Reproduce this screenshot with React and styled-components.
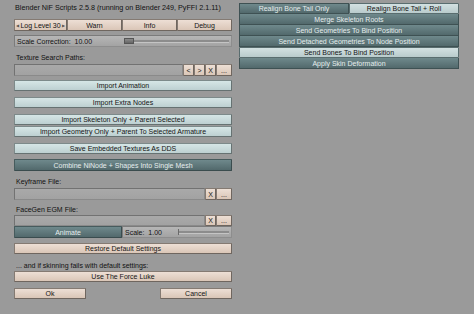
import React from 'react';
import styled, { createGlobalStyle, css } from 'styled-components';

const Global = createGlobalStyle`
  html, body { margin: 0; padding: 0; background: #9a9a9a; }
  body {
    width: 474px; height: 314px; overflow: hidden;
    font-family: "Liberation Sans", Arial, sans-serif;
    color: #111;
  }
`;

const Page = styled.div`
  display: flex;
  gap: 7px;
  padding: 3px 0 0 14px;
  box-sizing: border-box;
  height: 314px;
`;

const LeftCol = styled.div`
  width: 218px;
  display: flex;
  flex-direction: column;
`;

const RightCol = styled.div`
  width: 220px;
  display: flex;
  flex-direction: column;
`;

const Title = styled.div`
  font-size: 7.2px;
  line-height: 10px;
  height: 10px;
  padding-left: 1px;
  white-space: nowrap;
`;

const Label = styled.div`
  margin-top: ${p => p.$mt || 0}px;
  height: 10px;
  line-height: 10px;
  font-size: 7px;
  padding-left: 2px;
  white-space: nowrap;
`;

const variants = {
  beige: css`
    background: linear-gradient(#eddfd5, #dac6b7);
    color: #151515;
    border-color: #847a72 #6f665f #6f665f #847a72;
  `,
  blue: css`
    background: linear-gradient(#d6e6e6, #bdd0d1);
    color: #151515;
    border-color: #7d8a8a #667272 #667272 #7d8a8a;
  `,
  teal: css`
    background: linear-gradient(#6f898c, #52696c);
    color: #e6eeee;
    border-color: #465b5d #3a4c4e #3a4c4e #465b5d;
  `,
  pale: css`
    background: linear-gradient(#d3e1e2, #b9cbcc);
    color: #151515;
    border-color: #596d6f;
  `,
};

const Btn = styled.div`
  box-sizing: border-box;
  height: ${p => p.$h || 11}px;
  ${p => (p.$w ? `width: ${p.$w}px; flex: none;` : '')}
  ${p => (p.$grow ? 'flex: 1;' : '')}
  margin-top: ${p => p.$mt || 0}px;
  border: 1px solid;
  border-radius: 1px;
  display: flex;
  align-items: center;
  justify-content: center;
  font-size: 7px;
  line-height: 1;
  white-space: nowrap;
  overflow: hidden;
  ${p => variants[p.$v || 'blue']}
`;

const Row = styled.div`
  display: flex;
  height: ${p => p.$h || 11}px;
  margin-top: ${p => p.$mt || 0}px;
  justify-content: ${p => p.$justify || 'flex-start'};
`;

const Field = styled.div`
  box-sizing: border-box;
  flex: 1;
  height: 100%;
  background: linear-gradient(#a9a9a9, #a2a2a2);
  border: 1px solid;
  border-color: #727272 #8a8a8a #8a8a8a #727272;
`;

const NumField = styled.div`
  box-sizing: border-box;
  width: ${p => p.$w}px;
  flex: none;
  height: 100%;
  background: linear-gradient(#eddfd5, #dac6b7);
  border: 1px solid;
  border-color: #847a72 #6f665f #6f665f #847a72;
  display: flex;
  align-items: center;
  justify-content: space-between;
  padding: 0 1px;
  font-size: 7px;
  white-space: nowrap;
`;

const Arrow = styled.span`
  font-size: 4px;
  color: #5a5550;
`;

const Slider = styled.div`
  box-sizing: border-box;
  display: flex;
  align-items: center;
  height: ${p => p.$h || 12}px;
  ${p => (p.$grow ? 'flex: 1;' : '')}
  margin-top: ${p => p.$mt || 0}px;
  background: linear-gradient(#b6b6b6, #a3a3a3);
  border: 1px solid;
  border-color: #7b7b7b #8d8d8d #8d8d8d #7b7b7b;
  font-size: 7px;
  white-space: nowrap;
`;

const SliderText = styled.div`
  width: ${p => p.$w}px;
  flex: none;
  padding-left: 2px;
  box-sizing: border-box;
`;

const Track = styled.div`
  flex: 1;
  display: flex;
  align-items: center;
  padding-right: 2px;
`;

const Knob = styled.div`
  width: ${p => p.$w}px;
  height: ${p => p.$h}px;
  flex: none;
  background: ${p => (p.$w > 2 ? 'linear-gradient(#8a8a8a, #666)' : '#6a6a6a')};
  border: ${p => (p.$w > 2 ? '1px solid #555' : 'none')};
  box-sizing: border-box;
`;

const Line = styled.div`
  flex: 1;
  height: 2px;
  background: #8c8c8c;
  border-bottom: 1px solid #c4c4c4;
`;

const TealRow = styled(Btn)`
  border-radius: 0;
  border-width: ${p => (p.$first ? 1 : 0)}px 1px 1px 1px;
  border-color: #3e5153;
`;

export default function App() {
  return (
    <>
      <Global />
      <Page>
        <LeftCol>
          <Title>Blender NiF Scripts 2.5.8 (running on Blender 249, PyFFI 2.1.11)</Title>
          <Row $mt={6} $h={12}>
            <NumField $w={53}>
              <Arrow>◀</Arrow>Log Level 30<Arrow>▶</Arrow>
            </NumField>
            <Btn $v="beige" $h={12} $w={55}>Warn</Btn>
            <Btn $v="beige" $h={12} $w={55}>Info</Btn>
            <Btn $v="beige" $h={12} $w={55}>Debug</Btn>
          </Row>
          <Slider $mt={4}>
            <SliderText $w={109}>Scale Correction:&nbsp; 10.00</SliderText>
            <Track>
              <Knob $w={10} $h={6} />
              <Line />
            </Track>
          </Slider>
          <Label $mt={6}>Texture Search Paths:</Label>
          <Row $mt={1} $h={12}>
            <Field />
            <Btn $v="beige" $h={12} $w={11}>&lt;</Btn>
            <Btn $v="beige" $h={12} $w={11}>&gt;</Btn>
            <Btn $v="beige" $h={12} $w={11}>X</Btn>
            <Btn $v="beige" $h={12} $w={16}>...</Btn>
          </Row>
          <Btn $mt={4}>Import Animation</Btn>
          <Btn $mt={6}>Import Extra Nodes</Btn>
          <Btn $mt={6}>Import Skeleton Only + Parent Selected</Btn>
          <Btn $mt={1}>Import Geometry Only + Parent To Selected Armature</Btn>
          <Btn $mt={6}>Save Embedded Textures As DDS</Btn>
          <Btn $v="teal" $mt={5} $h={12}>Combine NiNode + Shapes Into Single Mesh</Btn>
          <Label $mt={6}>Keyframe File:</Label>
          <Row $mt={1} $h={12}>
            <Field />
            <Btn $v="beige" $h={12} $w={11}>X</Btn>
            <Btn $v="beige" $h={12} $w={16}>...</Btn>
          </Row>
          <Label $mt={5}>FaceGen EGM File:</Label>
          <Row $h={11}>
            <Field />
            <Btn $v="beige" $h={11} $w={11}>X</Btn>
            <Btn $v="beige" $h={11} $w={16}>...</Btn>
          </Row>
          <Row $h={12}>
            <Btn $v="teal" $h={12} $w={108}>Animate</Btn>
            <Slider $grow $h={12}>
              <SliderText $w={55}>Scale:&nbsp; 1.00</SliderText>
              <Track>
                <Knob $w={1} $h={6} />
                <Line />
              </Track>
            </Slider>
          </Row>
          <Btn $v="beige" $mt={5}>Restore Default Settings</Btn>
          <Label $mt={7}>... and if skinning fails with default settings:</Label>
          <Btn $v="beige">Use The Force Luke</Btn>
          <Row $mt={6} $h={11} $justify="space-between">
            <Btn $v="beige" $w={72}>Ok</Btn>
            <Btn $v="beige" $w={72}>Cancel</Btn>
          </Row>
        </LeftCol>
        <RightCol>
          <Row $h={11}>
            <TealRow $v="teal" $w={110} $first>Realign Bone Tail Only</TealRow>
            <Btn $v="pale" $w={110}>Realign Bone Tail + Roll</Btn>
          </Row>
          <TealRow $v="teal">Merge Skeleton Roots</TealRow>
          <TealRow $v="teal">Send Geometries To Bind Position</TealRow>
          <TealRow $v="teal">Send Detached Geometries To Node Position</TealRow>
          <Btn $v="pale">Send Bones To Bind Position</Btn>
          <TealRow $v="teal">Apply Skin Deformation</TealRow>
        </RightCol>
      </Page>
    </>
  );
}
